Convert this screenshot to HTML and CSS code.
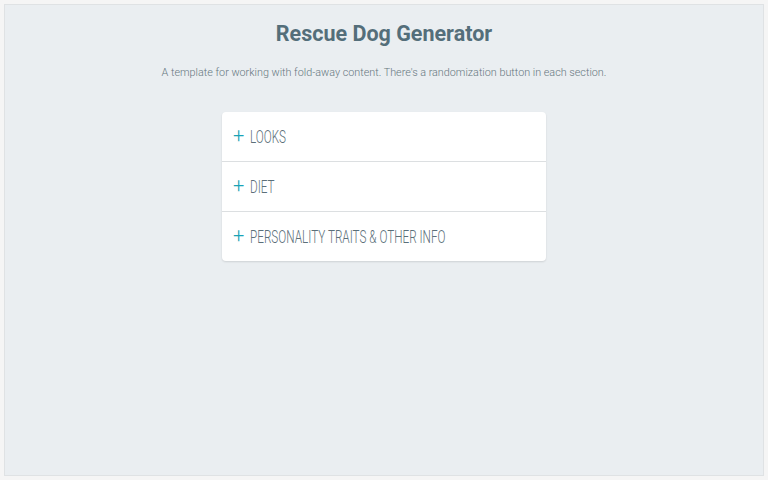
FILE: index.html
```html
<!DOCTYPE html>
<html lang="en">
<head>
    <meta charset="UTF-8">
    <meta name="viewport" content="width=device-width, initial-scale=1.0">
    <title>Rescue Dog Generator</title>
    <link rel="stylesheet" href="styles.css">
</head>
<body>
    <div class="frame">
        <h1>Rescue Dog Generator</h1>
        <p class="intro">A template for working with fold-away content. There's a randomization button in each section.</p>

        <div class="accordion">
            <div class="section">
                <span class="plus">+</span>
                <span class="label">Looks</span>
            </div>
            <div class="section">
                <span class="plus">+</span>
                <span class="label">Diet</span>
            </div>
            <div class="section">
                <span class="plus">+</span>
                <span class="label">Personality Traits &amp; Other Info</span>
            </div>
        </div>
    </div>
</body>
</html>
```

FILE: styles.css
```css
html, body {
    height: 100%;
}
body {
    margin: 0;
    padding: 4px;
    box-sizing: border-box;
    background: #f5f5f5;
    font-family: Roboto, "Liberation Sans", sans-serif;
}
.frame {
    box-sizing: border-box;
    height: 100%;
    background: #eaeef1;
    border: 1px solid #dfe2e4;
    display: flex;
    flex-direction: column;
    align-items: center;
    padding-top: 16px;
}
h1 {
    margin: 0;
    font-size: 21.5px;
    font-weight: 700;
    line-height: 26px;
    color: #546e7a;
}
.intro {
    margin: 19px 0 0;
    font-size: 10.8px;
    font-weight: 300;
    line-height: 14px;
    color: #66777f;
}
.accordion {
    margin-top: 32px;
    width: 324px;
    background: #fff;
    border-radius: 4px;
    box-shadow: 0 1px 2px rgba(0, 0, 0, 0.12);
}
.section {
    height: 49px;
    display: flex;
    align-items: center;
    padding-left: 11px;
    border-top: 1px solid #dcdfe1;
}
.section:first-child {
    border-top: none;
}
.plus {
    width: 17px;
    font-size: 20px;
    font-weight: 300;
    color: #1aa3b6;
    line-height: 1;
    margin-top: -3px;
}
.label {
    display: inline-block;
    font-weight: 300;
    font-size: 17.5px;
    text-transform: uppercase;
    color: #5b6f79;
    transform: scaleX(0.67);
    transform-origin: left center;
    white-space: nowrap;
}
```
